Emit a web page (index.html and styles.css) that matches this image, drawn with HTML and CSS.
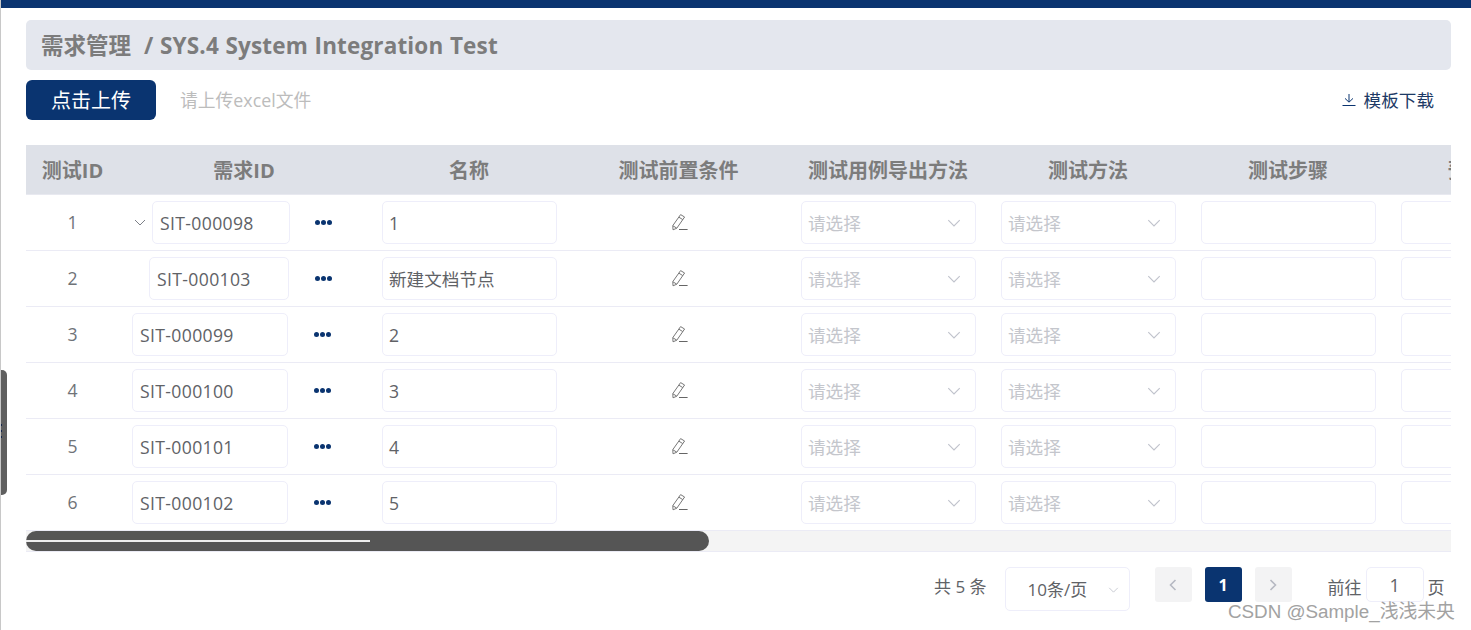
FILE: index.html
```html
<!DOCTYPE html>
<html lang="zh-CN">
<head>
<meta charset="utf-8">
<title>需求管理</title>
<link rel="stylesheet" href="styles.css">
</head>
<body>
<div class="topbar"></div>
<main class="page">
  <div class="crumb"><span class="crumb-root">需求管理</span><span class="crumb-rest">/ SYS.4 System Integration Test</span></div>
  <div class="toolbar">
    <button class="upload">点击上传</button>
    <span class="hint">请上传excel文件</span>
    <a class="download">
      <svg class="dl-icon" viewBox="0 0 14 14"><path d="M7 1v8M3 5.4 7 9.2l4-3.8M.5 12.5h13" fill="none" stroke="#0a3470" stroke-width="1"/></svg>
      模板下载
    </a>
  </div>
  <div class="table-wrap">
    <table class="grid">
      <colgroup>
        <col class="c-id"><col class="c-req"><col class="c-name"><col class="c-pre"><col class="c-std"><col class="c-std"><col class="c-std"><col class="c-std">
      </colgroup>
      <thead>
        <tr><th>测试ID</th><th>需求ID</th><th>名称</th><th>测试前置条件</th><th>测试用例导出方法</th><th>测试方法</th><th>测试步骤</th><th>预期结果</th></tr>
      </thead>
      <tbody id="rows"></tbody>
    </table>
  </div>
  <div class="hscroll"><div class="thumb"><div class="thumb-line"></div></div></div>
  <div class="pager">
    <span class="total">共 5 条</span>
    <div class="size">10条/页<svg class="chev small" viewBox="0 0 12 7"><path d="M1 1l5 5 5-5"/></svg></div>
    <button class="nav"><svg viewBox="0 0 8 12"><path d="M6.5 1 1.5 6l5 5"/></svg></button>
    <button class="cur">1</button>
    <button class="nav"><svg viewBox="0 0 8 12"><path d="M1.5 1l5 5-5 5"/></svg></button>
    <span class="goto">前往</span>
    <div class="jump">1</div>
    <span class="goto-end">页</span>
  </div>
</main>
<div class="side-tab"><span class="grip"><i></i><i></i><i></i></span></div>
<div class="watermark">CSDN @Sample_浅浅未央</div>
<script src="app.js"></script>
</body>
</html>
```
FILE: app.js
```js
var data = [
  ["1", "SIT-000098", "1", "r-parent"],
  ["2", "SIT-000103", "新建文档节点", "r-child"],
  ["3", "SIT-000099", "2", ""],
  ["4", "SIT-000100", "3", ""],
  ["5", "SIT-000101", "4", ""],
  ["6", "SIT-000102", "5", ""]
];
var chev = '<svg class="chev" viewBox="0 0 12 7"><path d="M1 1l5 5 5-5"/></svg>';
var pen = '<svg class="pen" viewBox="0 0 17 18"><path d="M9.6 1.6 13.6 4 5.8 15.2 2 16.8l-.2-4.2zM7.9 4.2l3.9 2.4M1.9 12.8l3.8 2.3" fill="none" stroke="#777" stroke-width="1"/><path d="M8 16.5h8.6" stroke="#666" stroke-width="1" fill="none"/></svg>';
var select = '<td><div class="box sel"><span class="ph">请选择</span>' + chev + '</div></td>';
document.getElementById("rows").innerHTML = data.map(function (r) {
  var tree = r[3] === "r-parent" ? '<svg class="chev tree" viewBox="0 0 12 7"><path d="M1 1l5 5 5-5"/></svg>' : "";
  return '<tr class="' + r[3] + '"><td class="num">' + r[0] + '</td>' +
    '<td><div class="req">' + tree + '<div class="box req-box">' + r[1] + '</div><span class="dots"><i></i><i></i><i></i></span></div></td>' +
    '<td><div class="box">' + r[2] + '</div></td>' +
    '<td class="mid">' + pen + '</td>' + select + select +
    '<td><div class="box"></div></td><td><div class="box"></div></td></tr>';
}).join("");
```
FILE: styles.css
```css
* { box-sizing: border-box; }
html, body { margin: 0; height: 630px; overflow: hidden; background: #fff; }
body {
  position: relative;
  border-left: 1px solid #c8c8c8;
  font-family: "Open Sans", "Noto Sans CJK SC", sans-serif;
  color: #606266;
}
.topbar { height: 8px; margin-left: -1px; background: #0a3470; }
.page { padding: 12px 20px 0 25px; }
.crumb {
  height: 50px;
  display: flex;
  align-items: center;
  gap: 13px;
  padding-left: 15px;
  background: #e4e7ee;
  border-radius: 5px;
  font-size: 22.5px;
  font-weight: 700;
  color: #7c7c7c;
}
.crumb-root { padding-bottom: 2px; }
.crumb-rest { letter-spacing: .15px; word-spacing: .6px; }
.toolbar { height: 40px; margin-top: 10px; display: flex; align-items: center; }
.upload {
  width: 130px;
  height: 40px;
  padding: 0 0 2px;
  border: 0;
  border-radius: 6px;
  background: #0a3470;
  color: #fff;
  font: 400 20px "Noto Sans CJK SC", sans-serif;
}
.hint { margin-left: 24px; margin-bottom: 2px; font-size: 17.8px; color: #bcbcbc; }
.download {
  margin-left: auto;
  margin-right: 17px;
  margin-bottom: 2px;
  display: flex;
  align-items: center;
  gap: 8px;
  font-size: 17.6px;
  color: #1d3a66;
}
.dl-icon { width: 14px; height: 14px; margin-top: 2px; }
.table-wrap { margin-top: 25px; overflow: hidden; }
.grid { width: 1562px; table-layout: fixed; border-collapse: separate; border-spacing: 0; }
.c-id { width: 93px; }
.c-req { width: 250px; }
.c-name { width: 200px; }
.c-pre { width: 219px; }
.c-std { width: 200px; }
th {
  height: 50px;
  padding: 0;
  background: #dee1e8;
  border-bottom: 1px solid #e8e9f0;
  font-size: 20px;
  font-weight: 700;
  color: #7c7c7c;
  text-align: center;
}
td {
  height: 56px;
  padding: 0 12px 0 13px;
  border-bottom: 1px solid #ebebf5;
  font-size: 17.6px;
  color: #606266;
}
td.num, td.mid { text-align: center; }
td.num { padding: 0 0 2px; color: #6f7378; }
.box {
  height: 43px;
  padding: 0 6px;
  display: flex;
  align-items: center;
  justify-content: space-between;
  background: #fff;
  border: 1px solid #eeeefa;
  border-radius: 5px;
}
.req { display: flex; align-items: center; }
.req-box { width: 156px; padding: 0 7px; letter-spacing: .35px; }
.dots { margin-left: 26px; display: flex; gap: 1px; }
.dots i { width: 5px; height: 5px; border-radius: 50%; background: #0a3470; }
.r-parent .req { padding-left: 2px; }
.r-parent .req-box { width: 138px; margin-left: 6px; }
.r-parent .dots { margin-left: 25px; }
.r-child .req { padding-left: 17px; }
.r-child .req-box { width: 140px; }
.r-child .dots { margin-left: 26px; }
.chev { width: 14px; height: 8px; flex: none; fill: none; stroke: #c0c3cc; stroke-width: 1; }
.chev.tree { width: 12px; height: 7px; stroke: #7d8087; }
.sel .chev { margin-right: 8px; }
.ph { color: #c4c6cc; }
.pen { width: 17px; height: 18px; display: block; margin: -1px auto 0; }
.hscroll { height: 21px; background: #f4f4f4; border-bottom: 1px solid #ebebf5; }
.thumb { width: 683px; height: 20px; position: relative; background: #555; border-radius: 10px; }
.thumb-line { position: absolute; left: 0; top: 9px; width: 344px; height: 2px; background: #eee; }
.pager { height: 78px; padding-top: 15px; display: flex; align-items: flex-start; font-size: 17px; }
.total { margin-left: 908px; margin-top: 6px; color: #606266; }
.size {
  width: 125px;
  height: 44px;
  margin-left: 18px;
  padding: 0 10px 2px 22px;
  display: flex;
  align-items: center;
  justify-content: space-between;
  border: 1px solid #eeeefa;
  border-radius: 5px;
  font-size: 17px;
}
.size .chev { width: 11px; height: 6px; margin-top: 3px; }
.nav, .cur {
  width: 37px;
  height: 35px;
  padding: 0;
  border: 0;
  border-radius: 3px;
  display: flex;
  align-items: center;
  justify-content: center;
}
.nav { margin-left: 25px; background: #f3f3f4; }
.nav svg { width: 8px; height: 12px; fill: none; stroke: #b6b9c2; stroke-width: 1.6; }
.cur { margin-left: 13px; background: #0a3470; color: #fff; font: 700 16px "Open Sans", sans-serif; }
.cur + .nav { margin-left: 13px; }
.goto { margin-left: 36px; margin-top: 7px; }
.jump {
  width: 58px;
  height: 35px;
  margin-left: 4px;
  display: flex;
  align-items: center;
  justify-content: center;
  border: 1px solid #eeeefa;
  border-radius: 5px;
  font-size: 18px;
}
.goto-end { margin-left: 4px; margin-top: 7px; }
.side-tab {
  position: absolute;
  left: -1px;
  top: 370px;
  width: 7px;
  height: 125px;
  background: #5f5f5f;
  border-radius: 0 5px 5px 0;
}
.grip { position: absolute; left: 0; top: 54px; display: flex; flex-direction: column; gap: 4px; }
.grip i { width: 2px; height: 2px; background: #14264c; }
.watermark {
  position: absolute;
  left: 1227px;
  top: 596px;
  font: 18.8px "Liberation Sans", "Noto Sans CJK SC", sans-serif;
  color: #a2a2a2;
  white-space: nowrap;
}
```
